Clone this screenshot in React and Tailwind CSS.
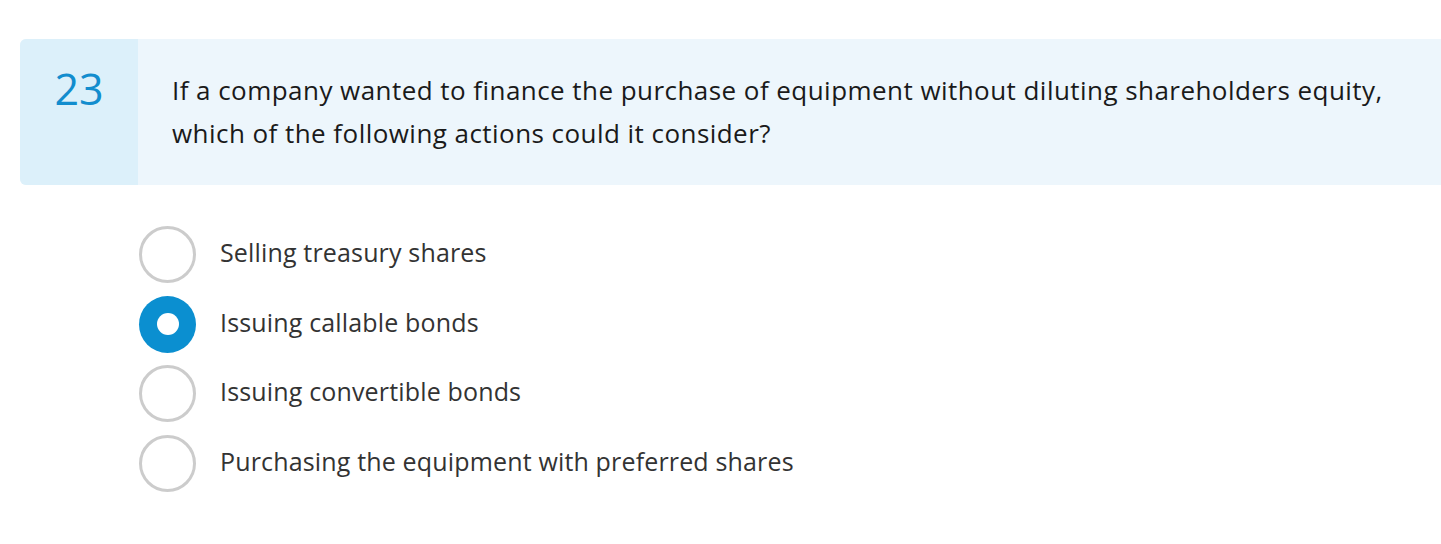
import React from 'react';

const options = [
  'Selling treasury shares',
  'Issuing callable bonds',
  'Issuing convertible bonds',
  'Purchasing the equipment with preferred shares',
];

function Radio({ checked }) {
  if (checked) {
    return (
      <span className="flex h-[57px] w-[57px] shrink-0 items-center justify-center rounded-full bg-[#0b8fd0]">
        <span className="h-[22px] w-[22px] rounded-full bg-white" />
      </span>
    );
  }
  return <span className="h-[57px] w-[57px] shrink-0 rounded-full border-[3px] border-[#cccccc] bg-white" />;
}

export default function App() {
  const selected = 1;

  return (
    <div className="min-h-[544px] bg-white pt-[39px] pl-[20px] font-['Open_Sans',sans-serif]">
      <div className="flex overflow-hidden rounded-l-md bg-[#edf6fc]">
        <div className="w-[118px] shrink-0 bg-[#dcf0fa] pt-[20px] text-center text-[43px] leading-[1.4] text-[#128dce]">
          23
        </div>
        <p className="py-[30px] pl-[34px] pr-[40px] text-[26px] leading-[43px] tracking-[0.45px] text-[#1a1a1a]">
          If a company wanted to finance the purchase of equipment without diluting shareholders equity,
          which of the following actions could it consider?
        </p>
      </div>

      <div className="mt-[41px] flex flex-col gap-[12.5px] pl-[119px]">
        {options.map((opt, i) => (
          <label key={opt} className="flex items-center gap-[24px]">
            <Radio checked={i === selected} />
            <span className="-mt-[3px] text-[25px] tracking-[0.16px] text-[#333333]">{opt}</span>
          </label>
        ))}
      </div>
    </div>
  );
}
